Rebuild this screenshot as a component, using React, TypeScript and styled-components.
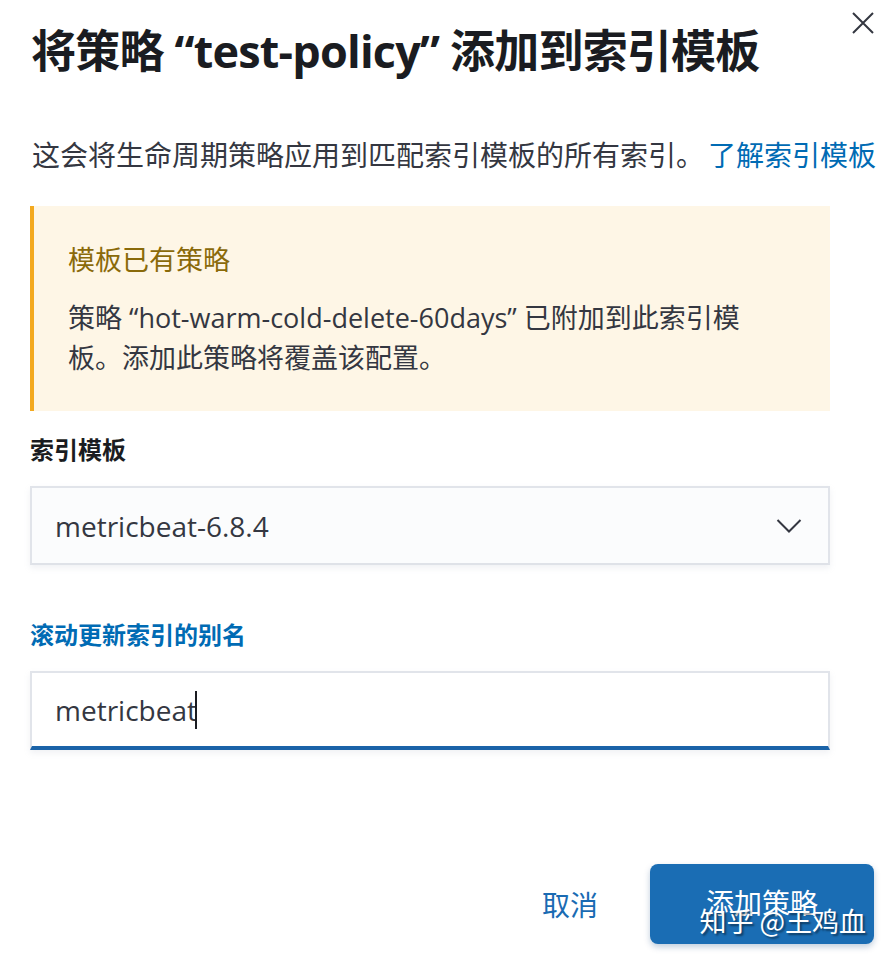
import React from "react";
import styled, { createGlobalStyle } from "styled-components";

const GlobalStyle = createGlobalStyle`
  html, body {
    margin: 0;
    padding: 0;
    background: #ffffff;
  }
  body {
    font-family: "Open Sans", "Noto Sans CJK SC", sans-serif;
    color: #343741;
  }
`;

const Page = styled.div`
  position: relative;
  width: 890px;
  height: 962px;
  overflow: hidden;
  background: #ffffff;
  padding-left: 30px;
  box-sizing: border-box;
`;

const CloseButton = styled.button`
  position: absolute;
  top: 10px;
  right: 14px;
  width: 26px;
  height: 26px;
  padding: 0;
  border: none;
  background: transparent;
  display: flex;
  align-items: center;
  justify-content: center;
`;

const Title = styled.h1`
  margin: 22px 0 0 1px;
  font-size: 45px;
  line-height: 58px;
  font-weight: 700;
  color: #1a1c21;
  white-space: nowrap;
  letter-spacing: -0.8px;
`;

const Description = styled.p`
  margin: 55px 0 0 2px;
  font-size: 28px;
  line-height: 40px;
  color: #343741;
  white-space: nowrap;
`;

const Link = styled.a`
  color: #006bb4;
  text-decoration: none;
  margin-left: 4px;
`;

const Callout = styled.div`
  margin-top: 31px;
  width: 800px;
  box-sizing: border-box;
  background: #fef6e6;
  border-left: 4px solid #f3a91f;
  padding: 34px 34px 33px 34px;
`;

const CalloutTitle = styled.div`
  font-size: 27px;
  line-height: 40px;
  color: #8a6a0a;
`;

const CalloutBody = styled.div`
  margin-top: 18px;
  font-size: 27px;
  line-height: 40px;
  color: #343741;
  width: 700px;
`;

const Label = styled.label<{ $active?: boolean }>`
  display: block;
  margin-top: ${(p) => (p.$active ? "54px" : "23px")};
  font-size: 24px;
  line-height: 32px;
  font-weight: 700;
  color: ${(p) => (p.$active ? "#006bb4" : "#1a1c21")};
`;

const Field = styled.div<{ $focused?: boolean }>`
  margin-top: 20px;
  width: 800px;
  height: ${(p) => (p.$focused ? "79px" : "79px")};
  box-sizing: border-box;
  display: flex;
  align-items: center;
  justify-content: space-between;
  padding: 0 26px 0 23px;
  background: ${(p) => (p.$focused ? "#ffffff" : "#fbfcfd")};
  border: 2px solid #e1e4ea;
  border-bottom: ${(p) => (p.$focused ? "4px solid #1a63a8" : "2px solid #dfe2e8")};
  box-shadow: 0 3px 6px rgba(152, 162, 179, 0.15);
  font-size: 28px;
  color: #343741;
`;

const FieldText = styled.span`
  display: flex;
  align-items: center;
`;

const Caret = styled.span`
  display: inline-block;
  width: 2px;
  height: 38px;
  margin-left: -2px;
  background: #1a1c21;
`;

const Footer = styled.div`
  margin-top: 114px;
  margin-right: 16px;
  display: flex;
  justify-content: flex-end;
  align-items: center;
  gap: 52px;
`;

const TextButton = styled.button`
  border: none;
  background: transparent;
  padding: 0;
  font-family: inherit;
  font-size: 28px;
  color: #1a6bb3;
`;

const PrimaryButton = styled.button`
  width: 224px;
  height: 80px;
  border: none;
  border-radius: 8px;
  background: #1a6db4;
  box-shadow: 0 3px 6px rgba(0, 60, 120, 0.25);
  font-family: inherit;
  font-size: 28px;
  color: #ffffff;
  padding-bottom: 6px;
`;

const Watermark = styled.div`
  position: absolute;
  right: 24px;
  bottom: 24px;
  font-family: "Noto Sans CJK SC", sans-serif;
  font-size: 27px;
  line-height: 34px;
  color: #ffffff;
  text-shadow: 2px 2px 2px rgba(0, 0, 0, 0.45);
`;

export default function App() {
  return (
    <Page>
      <GlobalStyle />
      <CloseButton aria-label="关闭">
        <svg width="24" height="24" viewBox="0 0 24 24">
          <path d="M2 2 L22 22 M22 2 L2 22" stroke="#343741" strokeWidth="2" fill="none" />
        </svg>
      </CloseButton>
      <Title>将策略 “test-policy” 添加到索引模板</Title>
      <Description>
        这会将生命周期策略应用到匹配索引模板的所有索引。<Link href="#">了解索引模板</Link>
      </Description>
      <Callout>
        <CalloutTitle>模板已有策略</CalloutTitle>
        <CalloutBody>
          策略 “hot-warm-cold-delete-60days” 已附加到此索引模板。添加此策略将覆盖该配置。
        </CalloutBody>
      </Callout>
      <Label>索引模板</Label>
      <Field>
        <FieldText>metricbeat-6.8.4</FieldText>
        <svg width="26" height="16" viewBox="0 0 26 16">
          <path d="M1.5 2 L13 13.5 L24.5 2" stroke="#343741" strokeWidth="2" fill="none" />
        </svg>
      </Field>
      <Label $active>滚动更新索引的别名</Label>
      <Field $focused>
        <FieldText>
          metricbeat
          <Caret />
        </FieldText>
      </Field>
      <Footer>
        <TextButton>取消</TextButton>
        <PrimaryButton>添加策略</PrimaryButton>
      </Footer>
      <Watermark>知乎 @王鸡血</Watermark>
    </Page>
  );
}
